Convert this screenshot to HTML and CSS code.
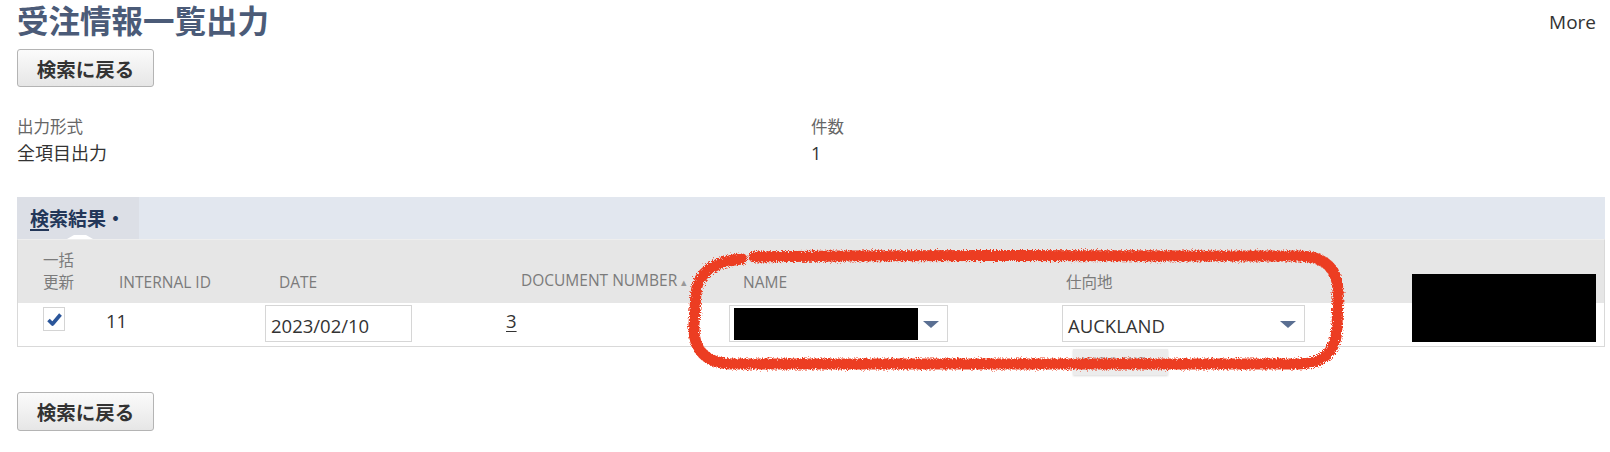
FILE: index.html
```html
<!DOCTYPE html>
<html lang="ja">
<head>
    <meta charset="UTF-8">
    <title>受注情報一覧出力</title>
    <link rel="stylesheet" href="styles.css">
</head>
<body>
    <div class="page">
        <div class="topbar">
            <h1 class="page-title">受注情報一覧出力</h1>
            <a class="more" href="#">More</a>
        </div>

        <button class="btn">検索に戻る</button>

        <div class="fields">
            <div class="field">
                <div class="field-label">出力形式</div>
                <div class="field-value">全項目出力</div>
            </div>
            <div class="field">
                <div class="field-label">件数</div>
                <div class="field-value">1</div>
            </div>
        </div>

        <div class="tabs">
            <div class="tab"><u>検</u>索結果・</div>
        </div>

        <div class="results">
            <div class="grid">
                <div class="th c1">一括<br>更新</div>
                <div class="th c2">INTERNAL ID</div>
                <div class="th c3">DATE</div>
                <div class="th c4">DOCUMENT NUMBER <span class="sort">▴</span></div>
                <div class="th c5">NAME</div>
                <div class="th c6">仕向地</div>
                <div class="redact-col"></div>

                <div class="td c1"><span class="check"><svg width="15" height="13" viewBox="0 0 15 13"><path d="M1.5 7 L5.5 11 L13.5 1.5" fill="none" stroke="#2b569a" stroke-width="3.6" stroke-linejoin="round"/></svg></span></div>
                <div class="td c2 num">11</div>
                <div class="td c3"><div class="input date">2023/02/10</div></div>
                <div class="td c4"><a class="doc-link" href="#">3</a></div>
                <div class="td c5">
                    <div class="input select name-select">
                        <span class="redact"></span>
                        <span class="caret"></span>
                    </div>
                </div>
                <div class="td c6 dest">
                    <div class="input select dest-select">
                        AUCKLAND
                        <span class="caret"></span>
                    </div>
                    <div class="dropdown">AUCKLAND</div>
                </div>
            </div>
        </div>

        <button class="btn btn-bottom">検索に戻る</button>
    </div>

    <!-- hand drawn annotation -->
    <svg class="annotation" width="1610" height="452" viewBox="0 0 1610 452">
        <defs>
            <filter id="rough" x="-5%" y="-20%" width="110%" height="140%">
                <feTurbulence type="fractalNoise" baseFrequency="0.8" numOctaves="2" seed="3"/>
                <feDisplacementMap in="SourceGraphic" scale="6"/>
            </filter>
        </defs>
        <path d="M 754 257 C 900 254 1100 256 1300 256 Q 1340 257 1338 296 L 1337 327 Q 1336 364 1298 364 L 732 364 Q 692 363 694 324 L 696 292 Q 699 263 742 259"
              fill="none" stroke="#ec3d22" stroke-width="11" stroke-linecap="round" filter="url(#rough)"/>
    </svg>
</body>
</html>
```

FILE: styles.css
```css
* {
    margin: 0;
    padding: 0;
    box-sizing: border-box;
}

body {
    font-family: 'Open Sans', 'Noto Sans CJK JP', sans-serif;
    color: #333;
    background: #fff;
    width: 1610px;
    height: 452px;
    overflow: hidden;
    position: relative;
}

.page {
    width: 1605px;
    padding-left: 17px;
}

.topbar {
    display: flex;
    justify-content: space-between;
    align-items: center;
    padding-right: 9px;
    height: 41px;
}

.page-title {
    font-size: 31.5px;
    font-weight: bold;
    color: #4b5b78;
    line-height: 41px;
}

.more {
    font-size: 19px;
    color: #333;
    text-decoration: none;
    margin-top: 2px;
}

.btn {
    display: block;
    width: 137px;
    height: 38px;
    margin-top: 8px;
    font-family: 'Noto Sans CJK JP', sans-serif;
    font-size: 19.5px;
    font-weight: bold;
    color: #333;
    background: linear-gradient(#fbfbfb, #e6e6e6);
    border: 1px solid #b4b4b4;
    border-radius: 3px;
}

.btn-bottom {
    margin-top: 45px;
    height: 39px;
}

.fields {
    display: flex;
    margin-top: 29px;
}

.field {
    width: 794px;
}

.field-label {
    font-size: 16.5px;
    line-height: 22px;
    color: #666;
}

.field-value {
    font-size: 18px;
    line-height: 27px;
    color: #333;
    margin-top: 2px;
}

.tabs {
    margin-top: 30px;
    height: 42px;
    background: #e2e7ef;
    display: flex;
}

.tab {
    position: relative;
    width: 122px;
    padding-left: 13px;
    background: #dcdfe6;
    font-family: 'Noto Sans CJK JP', sans-serif;
    font-size: 19px;
    font-weight: bold;
    color: #233759;
    line-height: 42px;
}

.tab u {
    text-decoration-thickness: 2px;
    text-underline-offset: 3px;
}

.tab::after {
    content: "";
    position: absolute;
    left: 50px;
    bottom: 0;
    border: 7px solid transparent;
    border-bottom: 4px solid #fff;
    border-top: 0;
    width: 12px;
}

.results {
    border: 1px solid #d9d9d9;
    border-top: 1px solid #eee;
}

.grid {
    display: grid;
    grid-template-columns: 84px 159px 231px 231px 333px 349px 199px;
    grid-template-rows: 63px 43px;
    background: linear-gradient(#e6e6e6 0 63px, #fff 63px);
}

.th {
    font-size: 15.5px;
    color: #7b7b7b;
    line-height: 22px;
    align-self: end;
    padding-bottom: 10px;
    white-space: nowrap;
}

.th.c1 {
    padding-left: 25px;
}

.th.c2 { padding-left: 17px; }
.th.c3 { padding-left: 18px; }
.th.c4 { padding-left: 29px; }
.th.c5 { padding-left: 20px; }
.th.c6 { padding-left: 10px; }

.sort {
    font-size: 11px;
    color: #999;
}

.redact-col {
    grid-column: 7;
    grid-row: 1 / 3;
    margin: 34px 0 4px 7px;
    width: 184px;
    background: #000;
}

.td {
    padding-top: 2px;
    font-size: 18.5px;
    color: #333;
}

.td.c1 {
    padding-left: 25px;
    padding-top: 4px;
}

.check {
    display: flex;
    align-items: center;
    justify-content: center;
    width: 22px;
    height: 24px;
    border: 1px solid #d4d4d4;
    background: #fff;
}

.num {
    padding-left: 4px;
    padding-top: 5px;
    line-height: 25px;
}

.input {
    height: 37px;
    border: 1px solid #d6d6d6;
    background: #fff;
    line-height: 39px;
    font-size: 18.5px;
    padding-left: 5px;
    color: #333;
}

.td.c3 {
    padding-left: 4px;
}

.date {
    width: 147px;
}

.td.c4 {
    padding-left: 14px;
    padding-top: 5px;
    line-height: 25px;
}

.doc-link {
    color: #333;
    text-underline-offset: 3px;
}

.td.c5,
.td.c6 {
    padding-left: 6px;
}

.select {
    position: relative;
}

.name-select {
    width: 219px;
    padding: 2px 0 0 4px;
}

.redact {
    display: block;
    width: 184px;
    height: 32px;
    background: #000;
}

.dest-select {
    width: 243px;
}

.caret {
    position: absolute;
    right: 8px;
    top: 15px;
    border-left: 8px solid transparent;
    border-right: 8px solid transparent;
    border-top: 7px solid #5a6f92;
}

.dest {
    position: relative;
}

.dropdown {
    position: absolute;
    left: 17px;
    top: 46px;
    width: 95px;
    height: 26px;
    background: #ececec;
    box-shadow: 0 1px 2px rgba(0, 0, 0, 0.15);
    font-size: 13px;
    color: #aaa;
    padding-left: 6px;
    line-height: 24px;
    overflow: hidden;
}

.annotation {
    position: absolute;
    top: 0;
    left: 0;
    pointer-events: none;
}
```
